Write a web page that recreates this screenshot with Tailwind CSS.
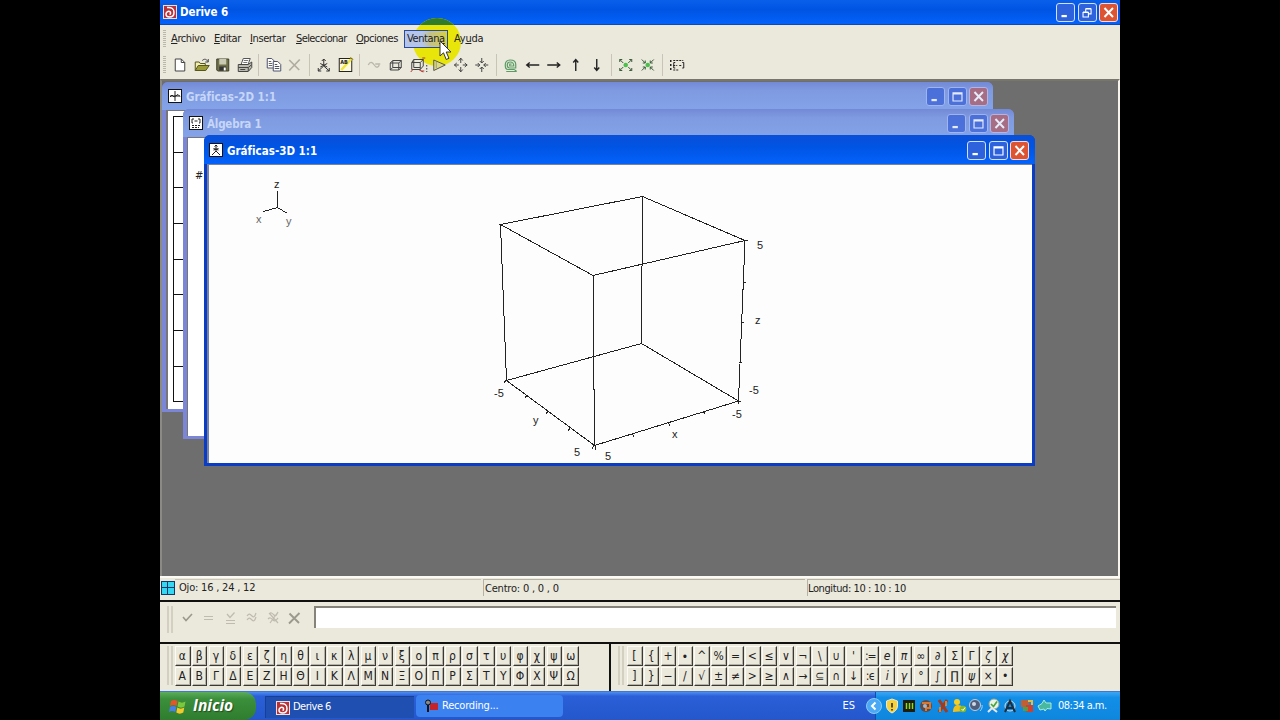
<!DOCTYPE html>
<html lang="es">
<head>
  <meta charset="UTF-8" />
  <meta name="viewport" content="width=device-width, initial-scale=1" />
  <title>Derive 6</title>
  <script src="https://cdn.jsdelivr.net/npm/@tailwindcss/browser@4"></script>
</head>
<body class="bg-black h-screen overflow-hidden font-['DejaVu_Sans_Condensed','DejaVu_Sans',sans-serif] text-[11px] text-[#222]">
  <div class="w-[960px] h-[720px] mx-auto flex flex-col bg-[#ebe8dc]">

    <!-- Barra de título -->
    <header class="h-[25px] shrink-0 flex items-center pl-[3px] pr-[2px] bg-linear-to-b from-[#0a5fea] via-[#0054e3] via-40% to-[#0462fb] border-b border-[#0a48c4]">
      <svg class="w-[14px] h-[14px]" viewBox="0 0 14 14"><rect width="14" height="14" fill="#f3dcdc"/><rect x="1" y="1" width="12" height="12" fill="#b8323a"/><path d="M4 2.500C9 2 11 4 11 7.500C11 10.500 9 12 6.500 12C4 12 3 10.500 3 9C3 7 5 6 6.500 6.500C8 7 8 9 6.500 9.500" fill="none" stroke="#fff" stroke-width="1.500"/></svg>
      <h1 class="ml-[3px] pt-[2px] flex-1 text-[11.5px] font-bold tracking-[-0.1px] text-white">Derive 6</h1>
      <div class="flex gap-[2.5px]" data-botones="restaurar"></div>
    </header>

    <!-- Menú -->
    <nav class="relative h-[28px] shrink-0 flex items-center pl-[3px]">
      <div class="w-[3px] h-[18px] mr-[2px] bg-[repeating-linear-gradient(#b9b6aa_0_1px,transparent_1px_2px)]"></div>
      <div class="absolute left-[253px] top-[-7px] w-[48px] h-[48px] rounded-full bg-[#e8e50a]"></div>
      <div class="absolute left-[253px] top-[-7px] w-[48px] h-[48px] rounded-full bg-[#2f7d2a] [clip-path:inset(0_0_41px_0)]"></div>
      <div class="relative flex items-center tracking-[-0.4px]">
        <span class="w-[43px] pl-[3px]"><u>A</u>rchivo</span>
        <span class="w-[36px] pl-[3px]"><u>E</u>ditar</span>
        <span class="w-[46px] pl-[3px]"><u>I</u>nsertar</span>
        <span class="w-[60px] pl-[3px] tracking-[-0.6px]"><u>S</u>eleccionar</span>
        <span class="w-[51px] pl-[3px] tracking-[-0.5px]"><u>O</u>pciones</span>
        <span class="w-[44px] h-[18px] pl-[2px] leading-[16px] border border-[#2a4a9c] bg-linear-to-r from-[#b5c5ea] from-40% via-[#c3c08a] via-60% to-[#d6cf3a]">Ventan<u>a</u></span>
        <span class="pl-[6px] tracking-[-0.25px]">Ay<u>u</u>da</span>
      </div>
      <svg class="absolute z-10 left-[279px] top-[15px] w-[13px] h-[21px]" viewBox="0 0 13 21"><path d="M1 1V16L4.500 12.800L7.200 19.500L10 18.300L7.200 12H12Z" fill="#fff" stroke="#333"/></svg>
    </nav>

    <!-- Herramientas -->
    <div class="relative h-[26px] shrink-0 flex items-center pl-[3px] pb-[2px] [&>svg]:w-[21.5px] [&>svg]:h-[18px] [&>svg]:shrink-0 [&>i]:w-px [&>i]:h-[22px] [&>i]:mx-[3.3px] [&>i]:bg-[#c9c5b6]">
      <div class="w-[3px] h-[18px] mr-[3px] bg-[repeating-linear-gradient(#b9b6aa_0_1px,transparent_1px_2px)]"></div>
      <svg viewBox="0 0 21 18"><path d="M6 3H12L15.500 6.500V15H6Z" fill="#fff" stroke="#444"/><path d="M12 3V6.500H15.500" fill="none" stroke="#444"/></svg>
      <svg viewBox="0 0 21 18"><path d="M4 14.500V6H8L9 7.500H14V9" fill="#f1eeb0" stroke="#55551c"/><path d="M4 14.500L7 9.500H18L14.500 14.500Z" fill="#9b9b3a" stroke="#55551c"/><path d="M11 4.500C13 2.500 15.500 3 16.500 5.500M17 3V6H14" fill="none" stroke="#444"/></svg>
      <svg viewBox="0 0 21 18"><path d="M4.500 3H16.500V15H5.500L4.500 14Z" fill="#70704a" stroke="#3e3e28"/><rect x="7" y="3" width="7" height="5.500" fill="#c9c9b4"/><rect x="7" y="10.500" width="7" height="4" fill="#333"/><rect x="11.500" y="11.500" width="2" height="3" fill="#fff"/></svg>
      <svg viewBox="0 0 21 18"><path d="M7 8L9 2.500H16L14 8" fill="#fff" stroke="#555"/><path d="M9.500 4.500H14M9 6.500H13" stroke="#777"/><path d="M4 8.500H14L17.500 6V11.500L14 15.500H4Z" fill="#bbbaad" stroke="#444"/><path d="M4 11.500H14V15M14 11.500L17 9M6 13.500H11" fill="none" stroke="#444"/></svg>
      <i></i>
      <svg viewBox="0 0 21 18"><path d="M4 2.500H8.500L11 5V12H4Z" fill="#fff" stroke="#4e536c"/><path d="M5.500 5.500H8M5.500 7.500H9M5.500 9.500H9" stroke="#666"/><path d="M10 5.500H14.500L17.500 8.500V15H10Z" fill="#fff" stroke="#4e536c"/><path d="M11.500 8.500H14M11.500 10.500H16M11.500 12.500H16" stroke="#4e536c"/></svg>
      <svg viewBox="0 0 21 18"><path d="M5 4L15 14M15.500 3.500L5 14.500" stroke="#b0ada0" stroke-width="1.700" fill="none"/></svg>
      <i></i>
      <svg viewBox="0 0 21 18"><path d="M10.500 3V10L5 15M10.500 10L16 15M8.500 5L10.500 3L12.500 5M5 12V15H8M16 12V15H13M7 7.500L14 11M14 7.500L7 11" stroke="#333" fill="none"/></svg>
      <svg viewBox="0 0 21 18"><rect x="4" y="2.500" width="12.500" height="13" fill="#fdfadb" stroke="#222"/><path d="M6 14L16 3" stroke="#f0e440" stroke-width="2.500"/><text x="5" y="8" font-size="5.500" font-weight="bold" fill="#222">AB</text><path d="M15 1L18 4" stroke="#a08610"/></svg>
      <i></i>
      <svg viewBox="0 0 21 18"><path d="M4 9C6 5 8 6 10 9S14 12 15 9M11 8H16" stroke="#bab7aa" fill="none" stroke-width="1.300"/></svg>
      <svg viewBox="0 0 21 18"><path d="M5 7H13.500V14H5ZM5 7L7.500 4.500H16V11.500L13.500 14M13.500 7L16 4.500M7.500 4.500V11.500H16M7.500 11.500L5 14" fill="none" stroke="#444"/></svg>
      <svg viewBox="0 0 21 18"><path d="M4.500 6.500H13V13.500H4.500ZM4.500 6.500L6.500 3.500H16V10L13 13.500M13 6.500L16 3.500M6.500 3.500V11.500H13" fill="none" stroke="#444"/><path d="M3.500 16L6 13M12 14L16 16M15 2H18M14 15H17" stroke="#b03a34"/><path d="M19.500 9V16" stroke="#333" stroke-dasharray="1.500 1.500"/></svg>
      <svg viewBox="0 0 21 18"><path d="M5.500 4L17 9L5.500 14.500Z" fill="#dedc7a" stroke="#555"/><path d="M8 6V12" stroke="#999"/></svg>
      <svg viewBox="0 0 21 18"><path d="M10.500 7V2M8.500 4.500L10.500 2.200L12.500 4.500M10.500 11V16M8.500 13.500L10.500 15.800L12.500 13.500M8.500 9H4M6.500 7L4.200 9L6.500 11M12.500 9H17M14.500 7L16.800 9L14.500 11" stroke="#444" fill="none"/></svg>
      <svg viewBox="0 0 21 18"><path d="M10.500 2V7M8.500 5L10.500 7L12.500 5M10.500 16V11M8.500 13L10.500 11L12.500 13M4 9H8.500M6.500 7L8.500 9L6.500 11M17 9H12.500M14.500 7L12.500 9L14.500 11" stroke="#444" fill="none"/></svg>
      <i></i>
      <svg viewBox="0 0 21 18"><path d="M14.500 13.500H8C5.500 13.500 5 12 5 9C5 5.500 6.500 4 10 4C13.500 4 15.500 5 15.500 8.500V12H9.500C7.500 12 7 11 7 9C7 7 8 6 10 6C12.500 6 13.500 7 13.500 10H9.500V8H11.500M6 15.500H16M14.500 14L16.500 15.500" stroke="#5a9c64" fill="none" stroke-width="1.200"/></svg>
      <svg viewBox="0 0 21 18"><path d="M17 9H4.500M7.500 6.500L4.500 9L7.500 11.500" stroke="#222" stroke-width="1.400" fill="none"/></svg>
      <svg viewBox="0 0 21 18"><path d="M4 9H16.500M13.500 6.500L16.500 9L13.500 11.500" stroke="#222" stroke-width="1.400" fill="none"/></svg>
      <svg viewBox="0 0 21 18"><path d="M10.500 15V3.500M8 6.500L10.500 3.500L13 6.500" stroke="#222" stroke-width="1.400" fill="none"/></svg>
      <svg viewBox="0 0 21 18"><path d="M10.500 3V14.500M8 11.500L10.500 14.500L13 11.500" stroke="#222" stroke-width="1.400" fill="none"/></svg>
      <i></i>
      <svg viewBox="0 0 21 18"><path d="M8 7L4.500 3.500M4.500 6V3.500H7M13 7L16.500 3.500M14 3.500H16.500V6M8 11L4.500 14.500M4.500 12V14.500H7M13 11L16.500 14.500M14 14.500H16.500V12" stroke="#3a5a3a" fill="none"/><circle cx="10.500" cy="9" r="2.300" fill="#4cc04c"/></svg>
      <svg viewBox="0 0 21 18"><path d="M4.500 3.500L8 7M8 4.500V7H5.500M16.500 3.500L13 7M13 4.500V7H15.500M4.500 14.500L8 11M5.500 11H8V13.500M16.500 14.500L13 11M13 13.500V11H15.500" stroke="#3a5a3a" fill="none"/><circle cx="10.500" cy="9" r="2.300" fill="#4cc04c"/></svg>
      <i></i>
      <svg viewBox="0 0 21 18"><path d="M4.500 4V14" stroke="#222" stroke-width="1.500" stroke-dasharray="2 2"/><path d="M7 4.500H17M7 14H13M7 9.500H11M13 9.500H15" stroke="#222" stroke-dasharray="2 1"/><path d="M9 6.500H7.500V12H9M16 6.500H17.500V12H16" stroke="#222" fill="none"/></svg>
    </div>

    <!-- Área de ventanas -->
    <main class="relative h-[497px] shrink-0 bg-[#6e6e6e] border-t-2 border-l-2 border-r-2 border-t-[#77756c] border-l-[#8b8a84] border-r-[#f4f2ea] overflow-hidden">

      <section class="absolute left-[0px] top-[1px] w-[831px] h-[330px] flex flex-col rounded-t-md bg-[#7b86d6] px-[4px] pb-[3px]">
        <div class="h-[28px] -mx-[4px] shrink-0 flex items-center pl-[6px] pr-[5px] rounded-t-md bg-linear-to-b from-[#7389d6] via-[#7f9ae0] via-30% to-[#83a3e8]">
          <svg class="w-[14px] h-[14px]" viewBox="0 0 14 14"><rect x=".5" y=".5" width="13" height="13" fill="#fff" stroke="#111"/><path d="M7 2V12M2 7H12M2 8L4 6L6 8L10 5.500L12 7.500" stroke="#222" fill="none"/></svg>
          <h2 class="ml-[4px] pt-[3px] flex-1 text-[11.5px] font-bold text-[#c6d6f8]">Gráficas-2D 1:1</h2>
          <div class="flex gap-[2.5px] opacity-80" data-botones="inactivo"></div>
        </div>
        <div class="flex-1 border-l-2 border-t border-[#77757a] bg-white">
          <svg class="w-[40px] h-[298px]" viewBox="168 111 40 298" shape-rendering="crispEdges"><path d="M190 116.500H173.500V401.500H190M173.500 152.500H190M173.500 187.500H190M173.500 223.500H190M173.500 259.500H190M173.500 294.500H190M173.500 330.500H190M173.500 366.500H190" fill="none" stroke="#111"/></svg>
        </div>
      </section>

      <section class="absolute left-[21px] top-[28px] w-[831px] h-[330px] flex flex-col rounded-t-md bg-[#7b86d6] px-[4px] pb-[3px]">
        <div class="h-[28px] -mx-[4px] shrink-0 flex items-center pl-[6px] pr-[5px] rounded-t-md bg-linear-to-b from-[#7389d6] via-[#7f9ae0] via-30% to-[#83a3e8]">
          <svg class="w-[14px] h-[14px]" viewBox="0 0 14 14"><rect x=".5" y=".5" width="13" height="13" fill="#fff" stroke="#111"/><path d="M3 3H5M3 3V7H4M11 3H9M11 3V7H10M5.500 5H8.500" stroke="#222" fill="none"/><path d="M3 9.500H11M3 11.500H10" stroke="#222" stroke-dasharray="2 1"/></svg>
          <h2 class="ml-[4px] pt-[3px] flex-1 text-[11.5px] font-bold tracking-[-0.2px] text-[#c6d6f8]">Álgebra 1</h2>
          <div class="flex gap-[2.5px] pt-px opacity-80" data-botones="inactivo"></div>
        </div>
        <div class="flex-1 border-l border-t border-[#77757a] bg-white pl-[7px] pt-[31px] text-[11px] leading-[14px]">#</div>
      </section>

      <section class="absolute left-[42px] top-[54px] w-[831px] h-[331px] flex flex-col rounded-t-md bg-[#0a3cc4] px-[3px] pb-[3px]">
        <div class="h-[29px] -mx-[3px] shrink-0 flex items-center pl-[5px] pr-[6px] pt-px rounded-t-md bg-linear-to-b from-[#0a4fd8] via-[#0054e3] via-40% to-[#0462fb]">
          <svg class="w-[14px] h-[14px]" viewBox="0 0 14 14"><rect x=".5" y=".5" width="13" height="13" fill="#fff" stroke="#111"/><path d="M7 2V8L3 12M7 8L11 12M5.500 3.500L7 2L8.500 3.500M4.500 5.500L9.500 7M9.500 5.500L4.500 7" stroke="#222" fill="none"/></svg>
          <h2 class="ml-[4px] pt-[3px] flex-1 text-[11.5px] font-bold text-white">Gráficas-3D 1:1</h2>
          <div class="flex gap-[2.5px] pt-px" data-botones="maximizar"></div>
        </div>
        <div class="flex-1 min-h-0 border-l-2 border-t border-[#77829c] bg-[#fdfdfd]">
          <svg class="w-[823px] h-[298px]" viewBox="209 165 823 298" fill="#222" font-size="11" font-family="Liberation Sans, sans-serif">
            <!-- Cubo -->
            <g fill="none" stroke="#222" shape-rendering="crispEdges">
              <path d="M500.500 224.500L642.500 196.500L745 240.500L593 275.500Z"/>
              <path d="M506.500 380.500L641.500 343.500L738.500 401L594.500 445.500Z"/>
              <path d="M500.500 224.500L506.500 380.500M642.500 196.500L641.500 343.500M745 240.500L738.500 401M593 275.500L594.500 445.500"/>
              <path d="M745 240.500H748M743.500 282.500H746M741 322.500H744M739 362.500H742M738 401.500H741M738 401V404"/>
              <path d="M506 380L504 383M527 395L525 398M548 411L546 414M570 428L568 431M594 445L592 449M595 445V450M632 433L634 437M668 422L670 426M703 411L705 414"/>
              <path d="M277.500 191V207.500L263.500 211.500M277.500 207.500L287.500 213.500"/>
            </g>
            <g>
              <text x="757" y="249">5</text>
              <text x="755" y="324">z</text>
              <text x="749" y="394">-5</text>
              <text x="732" y="418">-5</text>
              <text x="672" y="438">x</text>
              <text x="605" y="460">5</text>
              <text x="574" y="456">5</text>
              <text x="533" y="424">y</text>
              <text x="494" y="397">-5</text>
              <text x="274" y="188">z</text>
              <text x="256" y="223" fill="#666">x</text>
              <text x="286" y="225" fill="#666">y</text>
            </g>
          </svg>
        </div>
      </section>
    </main>

    <!-- Barra de estado -->
    <div class="h-[24px] shrink-0 flex items-start border-t-2 border-[#fbfaf5] tracking-[-0.2px]">
      <svg class="w-[15px] h-[15px] mt-[2px] shrink-0" viewBox="0 0 15 15" shape-rendering="crispEdges"><rect x="1" y="1" width="13" height="13" fill="#35d7f2" stroke="#123a66"/><path d="M7.500 1V14M1 7.500H14" stroke="#123a66"/></svg>
      <div class="w-[306px] h-[17px] mt-px leading-[15px] pl-[4px] border-t border-[#c9c5b6]">Ojo: 16 , 24 , 12</div>
      <div class="w-[322px] h-[17px] mt-px leading-[17px] ml-[2px] pl-[1px] border-t border-l border-[#b5b2a5]">Centro: 0 , 0 , 0</div>
      <div class="flex-1 h-[17px] mt-px leading-[17px] ml-[2px] tracking-[-0.4px] border-t border-l border-[#b5b2a5]">Longitud: 10 : 10 : 10</div>
    </div>

    <!-- Línea de entrada -->
    <div class="h-[42px] shrink-0 flex border-t-2 border-[#111] pl-[7px] pr-[4px] pt-[4px]">
      <div class="w-[6px] h-[27px] border-x-2 border-[#d3cfc1]"></div>
      <svg class="ml-[6px] w-[130px] h-[27px]" viewBox="179 606 130 27" fill="none" stroke="#bfbcaf" stroke-width="1.200">
        <path d="M183 617L186 620.500L192 614" stroke="#9b998d" stroke-width="1.600"/>
        <path d="M204 616.500H213M204 619.500H213"/>
        <path d="M227 614L230 617.500L234.500 612.500M226 620.500H235M226 623.500H235"/>
        <path d="M247 616C249 613 250 614 252 616S255 616 256 613M247 620C249 617 250 618 252 620S255 620 256 617"/>
        <path d="M269 614C271 612 272 613 274 615S277 614 278 612M270 623L278 612M270 614L278 623M268 619C270 617 271 618 273 620S276 620 278 618"/>
        <path d="M289.500 613.500L299 623M299.500 613L289 623.500" stroke="#9b998d" stroke-width="1.900"/>
      </svg>
      <div class="flex-1 h-[22px] ml-[5px] bg-white border-t-2 border-l-2 border-[#85837a]"></div>
    </div>

    <!-- Símbolos -->
    <div class="h-[49px] shrink-0 flex border-t-2 border-[#111]">
      <div class="w-[451px] flex pl-[7px] pt-[2px] border-r-2 border-[#111]">
        <div class="w-[6px] h-[39px] mr-[2px] border-x-2 border-[#d3cfc1]"></div>
        <div id="griego" class="grid grid-cols-[repeat(24,16.9px)] auto-rows-[20.5px] content-start"></div>
      </div>
      <div class="flex-1 flex pl-[7px] pt-[2px]">
        <div class="w-[6px] h-[39px] mr-[3px] border-x-2 border-[#d3cfc1]"></div>
        <div id="operadores" class="grid grid-cols-[repeat(23,16.87px)] auto-rows-[20.5px] content-start"></div>
      </div>
    </div>

    <!-- Barra de tareas -->
    <footer class="flex-1 flex items-stretch bg-linear-to-b from-[#4f8df0] via-[#2a5fd8] via-15% to-[#2457cc] border-t border-[#3c78d8] text-white">
      <div class="w-[96px] flex items-center pl-[9px] rounded-r-xl bg-linear-to-b from-[#5cad5c] via-[#3b8f3b] via-25% to-[#2f7d2f]">
        <svg class="w-[18px] h-[17px]" viewBox="0 0 18 17"><path d="M2 3C4 1.500 6 1.500 8.500 3L7.500 8C5.500 6.500 3 6.500 1 8Z" fill="#e8542a"/><path d="M9.500 3.500C12 5 14 5 16.500 3.500L15.500 8.500C13 10 11 10 8.500 8.500Z" fill="#7cc83c"/><path d="M1 9C3 7.500 5 7.500 7.300 9L6.300 14C4 12.500 2 12.500 0 14Z" fill="#4a7ee8"/><path d="M8.300 9.500C10.500 11 13 11 15.300 9.500L14.300 14.500C12 16 9.500 16 7.300 14.500Z" fill="#f4c92c"/></svg>
        <span class="ml-[6px] text-[15.5px] font-bold italic font-['Open_Sans',sans-serif] [text-shadow:1px_1px_1px_#1d4f1d]">Inicio</span>
      </div>
      <div class="w-[149px] ml-[9px] mt-[4px] mb-[2px] flex items-center pl-[10px] bg-[#1f4fb0] border-l border-t border-[#173f96]">
        <svg class="w-[14px] h-[14px]" viewBox="0 0 14 14"><rect width="14" height="14" fill="#f3dcdc"/><rect x="1" y="1" width="12" height="12" fill="#b8323a"/><path d="M4 2.500C9 2 11 4 11 7.500C11 10.500 9 12 6.500 12C4 12 3 10.500 3 9C3 7 5 6 6.500 6.500C8 7 8 9 6.500 9.500" fill="none" stroke="#fff" stroke-width="1.500"/></svg>
        <span class="ml-[3px] tracking-[-0.5px]">Derive 6</span>
      </div>
      <div class="w-[147px] ml-[2px] mt-[3px] mb-[3px] flex items-center pl-[8px] bg-[#3c81f0] rounded-sm">
        <svg class="w-[15px] h-[14px]" viewBox="0 0 15 14"><rect x="6" y="4" width="8" height="7" fill="#c3232b"/><circle cx="4" cy="3.500" r="2.500" fill="#888" stroke="#111"/><path d="M4 6V13" stroke="#111" stroke-width="2"/></svg>
        <span class="ml-[3px] tracking-[-0.2px]">Recording...</span>
      </div>
      <div class="flex-1 flex items-center justify-end pr-[20px]">ES</div>
      <div class="relative w-[245px] flex items-center bg-linear-to-b from-[#3aa6f4] via-[#128fe8] via-20% to-[#0f86de] border-l border-[#0c4fae]">
        <svg class="absolute -left-[10px] top-[6px] w-[16px] h-[16px]" viewBox="0 0 16 16"><circle cx="8" cy="8" r="7.500" fill="#4aa8f5" stroke="#8ccaf8"/><path d="M9.500 4.500L6 8L9.500 11.500" fill="none" stroke="#fff" stroke-width="2"/></svg>
        <svg class="ml-[10px] w-[172px] h-[16px] shrink-0" viewBox="886 698 172 16">
          <path d="M892 699L897.500 701V706C897.500 709 895 711.500 892 713C889 711.500 886.500 709 886.500 706V701Z" fill="#f6d13a" stroke="#e9e9d0"/><path d="M892 703V707.500M892 709V710.500" stroke="#222" stroke-width="1.500"/>
          <rect x="903" y="700" width="12" height="12" fill="#1d1d12"/><path d="M906.500 703V709M909.500 703V709M912.500 703V709" stroke="#8ddc1c" stroke-width="1.500"/>
          <circle cx="926" cy="706" r="6" fill="#5b4a48"/><path d="M922 703H930V708H926V711" stroke="#d9782c" stroke-width="2" fill="none"/><circle cx="925" cy="706" r="2" fill="#a9b4c4"/>
          <path d="M939 700L947 712M947 700L939 712" stroke="#a13a1e" stroke-width="3"/><path d="M940 707V712M946 701V706" stroke="#e29d37" stroke-width="1.500"/>
          <circle cx="957" cy="702" r="3" fill="#f5cf24"/><path d="M953 712C953 706 956 705 958 705C961 705 965 708 965 711Z" fill="#f0bf1c"/><circle cx="963" cy="709" r="3.300" fill="#84b82c"/><path d="M961.500 709L963 710.500L965 707.500" stroke="#fff" fill="none"/>
          <circle cx="975" cy="705" r="5.500" fill="#4d5f7c" stroke="#c3ccd8"/><circle cx="974" cy="704" r="2" fill="#cfd9e6"/><path d="M980 711C982 709 982.500 707 982 705" stroke="#a6d0f4" fill="none"/>
          <circle cx="994" cy="704" r="5" fill="#e9f4e4" stroke="#99a896"/><path d="M991 704L993.500 706.500L997 701.500" stroke="#48a440" stroke-width="1.700" fill="none"/><path d="M988 712L992 708L997 712" stroke="#e8e8e8" stroke-width="2" fill="none"/>
          <circle cx="1010" cy="706" r="5" fill="none" stroke="#cfe0ea"/><path d="M1005 712L1010 701L1015 712M1007 708H1013" stroke="#232d36" stroke-width="2" fill="none"/>
          <rect x="1021" y="700" width="8" height="7" fill="#c05e34"/><rect x="1026" y="705" width="7" height="7" fill="#d13f2d"/><rect x="1023" y="707" width="5" height="4" fill="#559c46"/><path d="M1028 701H1032V705" stroke="#e7bd42" stroke-width="2" fill="none"/>
          <path d="M1038 706L1042 703.500L1044 700L1046 703H1051V709L1047 708.500L1045 711L1044 709L1040 710Z" fill="#48b8a0" stroke="#a8ecd4"/>
        </svg>
        <span class="whitespace-nowrap tracking-[-0.5px]">08:34 a.m.</span>
      </div>
    </footer>
  </div>

  <script>
    // Paletas de símbolos, una cadena por fila
    const griego = [
      'α β γ δ ε ζ η θ ι κ λ μ ν ξ ο π ρ σ τ υ φ χ ψ ω',
      'Α Β Γ Δ Ε Ζ Η Θ Ι Κ Λ Μ Ν Ξ Ο Π Ρ Σ Τ Υ Φ Χ Ψ Ω'
    ];
    const operadores = [
      "[ { + ∙ ^ % = < ≤ ∨ ¬ \\ ∪ ' := e π ∞ ∂ Σ Γ ζ χ",
      '] } − / √ ± ≠ > ≥ ∧ → ⊆ ∩ ↓ :ϵ i γ ° ∫ ∏ ψ × •'
    ];

    function cargarSimbolos(id, filas) {
      const rejilla = document.getElementById(id);
      filas.join(' ').split(' ').forEach(simbolo => {
        const boton = document.createElement('button');
        boton.className = "w-[15.5px] h-[19.5px] flex items-center justify-center overflow-hidden whitespace-nowrap pr-px text-[12px] leading-none bg-[#ebe8dc] border border-l-[#fbfaf5] border-t-[#fbfaf5] border-r-[#3a3935] border-b-[#3a3935] shadow-[inset_-1px_-1px_0_#b5b2a5]";
        if (simbolo === ':=') boton.classList.add('tracking-[-1px]');
        if (simbolo === ':ϵ') boton.classList.add('tracking-[-0.5px]');
        if ('eπiγψχζ'.includes(simbolo) && id === 'operadores') boton.classList.add('italic');
        boton.textContent = simbolo;
        rejilla.appendChild(boton);
      });
    }

    // Botones de minimizar, maximizar/restaurar y cerrar
    const iconos = {
      minimizar: '<path d="M5 13.500H11" stroke="#fff" stroke-width="2.500"/>',
      maximizar: '<path d="M4.500 5.500H14.500V14.500H4.500ZM4.500 6.500H14.500" fill="none" stroke="#fff" stroke-width="1.300"/>',
      restaurar: '<path d="M4.500 9.500H10.500V14.500H4.500ZM4.500 9H10.500M7.500 9V5.500H13.500V11H10.500M7.500 5H13.500" fill="none" stroke="#fff" stroke-width="1.200"/>',
      cerrar: '<path d="M5 4.500L14.500 14.500M14.500 4.500L5 14.500" stroke="#fff" stroke-width="2.200"/>'
    };

    document.querySelectorAll('[data-botones]').forEach(grupo => {
      const tipo = grupo.dataset.botones;
      const central = tipo === 'restaurar' ? 'restaurar' : 'maximizar';
      const rojo = tipo === 'inactivo' ? 'bg-[#b0626e] border-[#c3bbe6]' : 'bg-[#dd5433] border-[#f3dcd8]';
      const azul = tipo === 'inactivo' ? 'bg-[#3f66d8] border-[#a9bcf0]' : 'bg-[#2e62dc] border-[#d3e0fa]';
      ['minimizar', central, 'cerrar'].forEach(nombre => {
        const color = nombre === 'cerrar' ? rojo : azul;
        grupo.innerHTML += `<button class="w-[19px] h-[19px] rounded-[3px] border ${color}"><svg class="w-[17px] h-[17px]" viewBox="0 0 19 19">${iconos[nombre]}</svg></button>`;
      });
    });

    cargarSimbolos('griego', griego);
    cargarSimbolos('operadores', operadores);
  </script>
</body>
</html>
